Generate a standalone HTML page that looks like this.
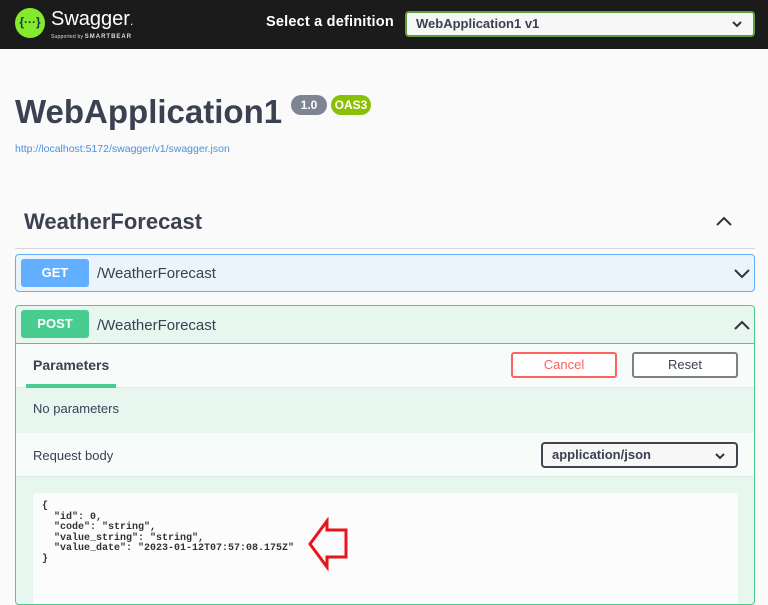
<!DOCTYPE html>
<html><head><meta charset="utf-8"><style>
*{margin:0;padding:0;box-sizing:border-box}
body{width:768px;height:596px;overflow:hidden;background:#fafafa;font-family:"Liberation Sans","DejaVu Sans",sans-serif;color:#3b4151;position:relative}
.hdr{position:absolute;left:0;top:0;width:768px;height:49px;background:#1b1b1b}
.abs{position:absolute}
</style></head><body>
<div class="hdr">
 <div class="abs" style="left:15px;top:8px;width:30px;height:30px;border-radius:50%;background:#85ea2d;color:#173647;font-size:12px;font-weight:bold;text-align:center;line-height:29px">{···}</div>
 <div class="abs" style="left:51px;top:8px;color:#fff;font-size:20px">Swagger<span style="font-size:12px">.</span></div>
 <div class="abs" style="left:51px;top:34px;color:#ddd;font-size:5px;letter-spacing:0.2px">Supported by <b style="font-size:6px;letter-spacing:1px">SMARTBEAR</b></div>
 <div class="abs" style="left:266px;top:14px;color:#fff;font-size:14.5px;font-weight:bold;letter-spacing:0.2px">Select a definition</div>
 <div class="abs" style="left:405px;top:11px;width:350px;height:26px;background:#f7f7f7;border:2px solid #62a03f;border-radius:4px;font-size:13px;font-weight:bold;color:#3b4151;padding:3px 0 0 9px">WebApplication1 v1
  <svg class="abs" style="right:10px;top:6px" width="12" height="10" viewBox="0 0 12 10"><path d="M2 3l4 4 4-4" stroke="#333" stroke-width="2" fill="none"/></svg></div>
</div>
<div class="abs" style="left:15px;top:93px;font-size:33px;font-weight:bold;color:#3b4151">WebApplication1</div>
<div class="abs" style="left:291px;top:95px;width:36px;height:20px;border-radius:10px;background:#7d8492;color:#fff;font-size:12px;font-weight:bold;text-align:center;line-height:20px">1.0</div>
<div class="abs" style="left:331px;top:95px;width:40px;height:20px;border-radius:10px;background:#89bf04;color:#fff;font-size:12px;font-weight:bold;text-align:center;line-height:20px">OAS3</div>
<div class="abs" style="left:15px;top:143px;font-size:10.5px;color:#4990e2">http://localhost:5172/swagger/v1/swagger.json</div>
<div class="abs" style="left:24px;top:209px;font-size:22px;font-weight:bold;color:#3b4151">WeatherForecast</div>
<svg class="abs" style="left:715px;top:215px" width="18" height="12" viewBox="0 0 18 12"><path d="M2 10l7-7 7 7" stroke="#333" stroke-width="2" fill="none"/></svg>
<div class="abs" style="left:15px;top:248px;width:740px;height:1px;background:#d5d7db"></div>
<div class="abs" style="left:15px;top:254px;width:740px;height:38px;background:#ebf3fb;border:1px solid #61affe;border-radius:4px">
 <div class="abs" style="left:5px;top:4px;width:68px;height:28px;background:#61affe;border-radius:3px;color:#fff;font-weight:bold;font-size:13px;text-align:center;line-height:28px">GET</div>
 <div class="abs" style="left:81px;top:10px;font-size:15px;color:#3b4151">/WeatherForecast</div>
 <svg class="abs" style="left:717px;top:13px" width="18" height="12" viewBox="0 0 18 12"><path d="M2 2l7 7 7-7" stroke="#333" stroke-width="2" fill="none"/></svg>
</div>
<div class="abs" style="left:15px;top:305px;width:740px;height:300px;background:#e8f6f0;border:1px solid #49cc90;border-radius:4px;overflow:hidden">
 <div class="abs" style="left:5px;top:4px;width:68px;height:28px;background:#49cc90;border-radius:3px;color:#fff;font-weight:bold;font-size:13px;text-align:center;line-height:28px">POST</div>
 <div class="abs" style="left:81px;top:11px;font-size:15px;color:#3b4151">/WeatherForecast</div>
 <svg class="abs" style="left:717px;top:13px" width="18" height="12" viewBox="0 0 18 12"><path d="M2 10l7-7 7 7" stroke="#333" stroke-width="2" fill="none"/></svg>
 <div class="abs" style="left:0;top:37px;width:740px;height:1px;background:#49cc90"></div>
 <div class="abs" style="left:0;top:38px;width:740px;height:44px;background:#f7fbf9;border-bottom:1px solid #dfe8e3"></div>
 <div class="abs" style="left:17px;top:51px;font-size:14px;font-weight:bold;color:#3b4151">Parameters</div>
 <div class="abs" style="left:10px;top:78px;width:90px;height:4px;background:#49cc90"></div>
 <div class="abs" style="left:495px;top:46px;width:106px;height:26px;border:2px solid #ff6060;border-radius:3px;color:#ff6060;font-size:13px;text-align:center;line-height:22px;background:#fff">Cancel</div>
 <div class="abs" style="left:616px;top:46px;width:106px;height:26px;border:2px solid #808080;border-radius:3px;color:#3b4151;font-size:13px;text-align:center;line-height:22px;background:#fff">Reset</div>
 <div class="abs" style="left:17px;top:95px;font-size:13px;color:#3b4151">No parameters</div>
 <div class="abs" style="left:0;top:127px;width:740px;height:44px;background:#f7fbf9;border-bottom:1px solid #dfe8e3"></div>
 <div class="abs" style="left:17px;top:142px;font-size:13px;color:#3b4151">Request body</div>
 <div class="abs" style="left:525px;top:136px;width:197px;height:26px;border:2px solid #41444e;border-radius:4px;background:#f7f7f7;font-size:13px;font-weight:bold;padding:3px 0 0 9px">application/json
  <svg class="abs" style="right:10px;top:7px" width="12" height="10" viewBox="0 0 12 10"><path d="M2 3l4 4 4-4" stroke="#333" stroke-width="2" fill="none"/></svg></div>
 <div class="abs" style="left:17px;top:187px;width:705px;height:120px;background:#fcfcfc;border-radius:4px"></div>
 <pre class="abs" style="left:26px;top:196px;font-family:'Liberation Mono',monospace;font-size:10px;line-height:10.5px;font-weight:bold;color:#333">{
  "id": 0,
  "code": "string",
  "value_string": "string",
  "value_date": "2023-01-12T07:57:08.175Z"
}</pre>
</div>
<svg class="abs" style="left:306px;top:517px" width="44" height="54" viewBox="0 0 44 54"><path d="M4 27L21 4V13H40V40H21V50Z" fill="none" stroke="#e8141c" stroke-width="3" stroke-linejoin="miter"/></svg>
</body></html>
